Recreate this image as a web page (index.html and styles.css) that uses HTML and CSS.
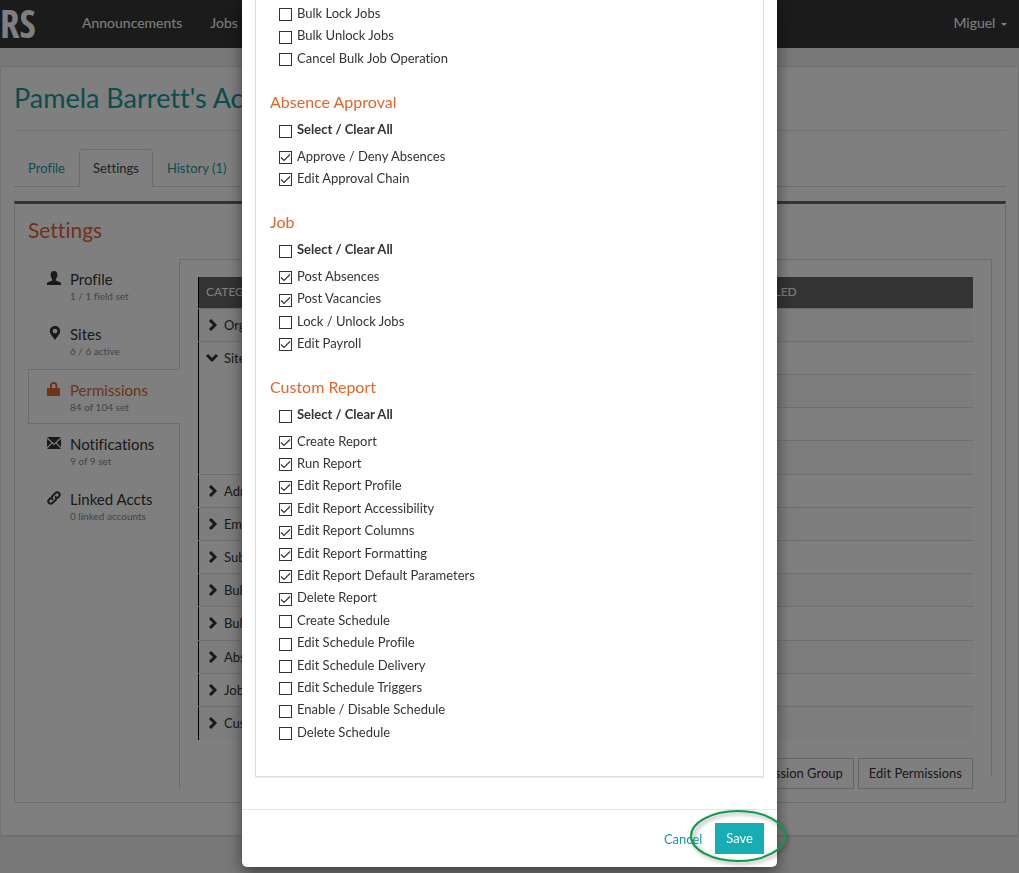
FILE: index.html
```
<!DOCTYPE html>
<html lang="en">
<head>
    <meta charset="utf-8">
    <title>Account Settings</title>
    <link rel="stylesheet" href="styles.css">
</head>
<body>

    <nav class="navbar">
        <a class="brand" href="#">RS</a>
        <a class="nav-link" href="#">Announcements</a>
        <a class="nav-link" href="#">Jobs</a>
        <a class="nav-link user" href="#">Miguel <span class="caret"></span></a>
    </nav>

    <main class="card">
        <h1>Pamela Barrett's Account</h1>

        <div class="tabs">
            <a href="#">Profile</a>
            <a class="active" href="#">Settings</a>
            <a href="#">History (1)</a>
        </div>

        <section class="settings">
            <h2>Settings</h2>
            <div class="settings-body">
                <ul class="side">
                    <li>
                        <svg class="icon" viewBox="0 0 14 14"><path d="M7 0C4.800 0 3.600 1.500 3.600 3.800c0 1.800.7 3.300 1.600 4.300v1.300L.9 11.200C.3 11.500 0 12 0 12.600V14h14v-1.400c0-.6-.3-1.100-.9-1.400L8.800 9.400V8.100c.9-1 1.600-2.500 1.600-4.300C10.400 1.500 9.200 0 7 0z"/></svg>
                        <a href="#">Profile<small>1 / 1 field set</small></a>
                    </li>
                    <li>
                        <svg class="icon" viewBox="0 0 14 14"><path fill-rule="evenodd" d="M8 0C5 0 2.800 2.200 2.800 5c0 3.300 3.400 6 5.200 9 1.800-3 5.200-5.700 5.200-9C13.200 2.200 11 0 8 0zm0 2.700a2.400 2.400 0 1 1 0 4.800 2.400 2.400 0 0 1 0-4.800z"/></svg>
                        <a href="#">Sites<small>6 / 6 active</small></a>
                    </li>
                    <li class="active">
                        <svg class="icon" viewBox="0 0 14 14"><path fill-rule="evenodd" d="M3 6V3.500C3 1.400 4.500 0 6.700 0s3.700 1.400 3.700 3.500V6H13v7.200c0 .5-.3.800-.8.800H.8c-.5 0-.8-.3-.8-.8V6zm2 0h3.400V3.600c0-1-.7-1.600-1.700-1.600S5 2.600 5 3.600z"/></svg>
                        <a href="#">Permissions<small>84 of 104 set</small></a>
                    </li>
                    <li>
                        <svg class="icon" viewBox="0 0 14 14"><path d="M0 1h14L7 7.500zM0 2.700l4.300 4L0 11.200zM14 2.700v8.500L9.700 6.700zM5.200 7.500L7 9.200l1.800-1.700L14 13H0z"/></svg>
                        <a href="#">Notifications<small>9 of 9 set</small></a>
                    </li>
                    <li>
                        <svg class="icon line" viewBox="0 0 14 14"><path d="M6 8.800C4.300 7.600 4.400 6.200 5.500 5L8.600 1.900C11 .2 14 3 12.200 5.200L10.300 7.200M8 5.200c1.700 1.200 1.600 2.600.5 3.800L5.400 12.100C3 13.800 0 11 1.800 8.800L3.700 6.800"/></svg>
                        <a href="#">Linked Accts<small>0 linked accounts</small></a>
                    </li>
                </ul>

                <div class="pane">
                    <table>
                        <thead>
                            <tr><th class="col-category">CATEGORY</th><th class="col-name">PERMISSION</th><th>ENABLED</th></tr>
                        </thead>
                        <tbody>
                            <tr><td><svg class="chevron" viewBox="0 0 12 12"><path d="M4 1l5 5-5 5"/></svg>Organization</td><td></td><td></td></tr>
                            <tr><td rowspan="4"><svg class="chevron" viewBox="0 0 12 12"><path d="M1 3l5 5 5-5"/></svg>Site</td><td></td><td></td></tr>
                            <tr><td></td><td></td></tr>
                            <tr><td></td><td></td></tr>
                            <tr><td></td><td></td></tr>
                            <tr><td><svg class="chevron" viewBox="0 0 12 12"><path d="M4 1l5 5-5 5"/></svg>Administrator</td><td></td><td></td></tr>
                            <tr><td><svg class="chevron" viewBox="0 0 12 12"><path d="M4 1l5 5-5 5"/></svg>Employee</td><td></td><td></td></tr>
                            <tr><td><svg class="chevron" viewBox="0 0 12 12"><path d="M4 1l5 5-5 5"/></svg>Substitute</td><td></td><td></td></tr>
                            <tr><td><svg class="chevron" viewBox="0 0 12 12"><path d="M4 1l5 5-5 5"/></svg>Bulk Absence</td><td></td><td></td></tr>
                            <tr><td><svg class="chevron" viewBox="0 0 12 12"><path d="M4 1l5 5-5 5"/></svg>Bulk Job</td><td></td><td></td></tr>
                            <tr><td><svg class="chevron" viewBox="0 0 12 12"><path d="M4 1l5 5-5 5"/></svg>Absence</td><td></td><td></td></tr>
                            <tr><td><svg class="chevron" viewBox="0 0 12 12"><path d="M4 1l5 5-5 5"/></svg>Job</td><td></td><td></td></tr>
                            <tr><td><svg class="chevron" viewBox="0 0 12 12"><path d="M4 1l5 5-5 5"/></svg>Custom</td><td></td><td></td></tr>
                        </tbody>
                    </table>
                    <div class="actions">
                        <button type="button">Edit Permission Group</button>
                        <button type="button">Edit Permissions</button>
                    </div>
                </div>
            </div>
        </section>
    </main>

    <div class="backdrop">
        <form class="modal">
            <div class="modal-panel">
                <ul class="checks">
                    <li><label><input type="checkbox">Bulk Lock Jobs</label></li>
                    <li><label><input type="checkbox">Bulk Unlock Jobs</label></li>
                    <li><label><input type="checkbox">Cancel Bulk Job Operation</label></li>
                </ul>

                <h3>Absence Approval</h3>
                <ul class="checks">
                    <li class="all"><label><input type="checkbox">Select / Clear All</label></li>
                    <li><label><input type="checkbox" checked>Approve / Deny Absences</label></li>
                    <li><label><input type="checkbox" checked>Edit Approval Chain</label></li>
                </ul>

                <h3>Job</h3>
                <ul class="checks">
                    <li class="all"><label><input type="checkbox">Select / Clear All</label></li>
                    <li><label><input type="checkbox" checked>Post Absences</label></li>
                    <li><label><input type="checkbox" checked>Post Vacancies</label></li>
                    <li><label><input type="checkbox">Lock / Unlock Jobs</label></li>
                    <li><label><input type="checkbox" checked>Edit Payroll</label></li>
                </ul>

                <h3>Custom Report</h3>
                <ul class="checks">
                    <li class="all"><label><input type="checkbox">Select / Clear All</label></li>
                    <li><label><input type="checkbox" checked>Create Report</label></li>
                    <li><label><input type="checkbox" checked>Run Report</label></li>
                    <li><label><input type="checkbox" checked>Edit Report Profile</label></li>
                    <li><label><input type="checkbox" checked>Edit Report Accessibility</label></li>
                    <li><label><input type="checkbox" checked>Edit Report Columns</label></li>
                    <li><label><input type="checkbox" checked>Edit Report Formatting</label></li>
                    <li><label><input type="checkbox" checked>Edit Report Default Parameters</label></li>
                    <li><label><input type="checkbox" checked>Delete Report</label></li>
                    <li><label><input type="checkbox">Create Schedule</label></li>
                    <li><label><input type="checkbox">Edit Schedule Profile</label></li>
                    <li><label><input type="checkbox">Edit Schedule Delivery</label></li>
                    <li><label><input type="checkbox">Edit Schedule Triggers</label></li>
                    <li><label><input type="checkbox">Enable / Disable Schedule</label></li>
                    <li><label><input type="checkbox">Delete Schedule</label></li>
                </ul>
            </div>

            <div class="modal-footer">
                <a href="#">Cancel</a>
                <span class="save-wrap">
                    <button type="submit">Save</button>
                    <svg class="ring" viewBox="0 0 98 56"><ellipse cx="48" cy="27" rx="47" ry="25"/></svg>
                </span>
            </div>
        </form>
    </div>

</body>
</html>
```
FILE: styles.css
```
* {
    box-sizing: border-box;
}
body {
    margin: 0;
    min-height: 100vh;
    background: #f0f0f0;
    font-family: Lato, "Liberation Sans", sans-serif;
    font-size: 13px;
    font-variant-ligatures: none;
    line-height: 20px;
    color: #333;
    overflow: hidden;
}
a {
    color: #159ba1;
    text-decoration: none;
}
ul {
    list-style: none;
    margin: 0;
    padding: 0;
}
h1, h2, h3 {
    margin: 0;
    font-weight: normal;
}

/* top bar */
.navbar {
    display: flex;
    align-items: center;
    height: 48px;
    padding: 0 12px 2px 0;
    background: #363636;
}
.brand {
    width: 82px;
    font: bold 39px/46px "Open Sans Condensed", "Roboto Condensed", Roboto, sans-serif;
    color: #fff;
}
.nav-link {
    margin-right: 28px;
    font-size: 14px;
    color: #fff;
}
.user {
    margin: 0 0 0 auto;
}
.caret {
    display: inline-block;
    margin-left: 2px;
    border: 3px solid transparent;
    border-top-color: #fff;
    border-bottom: 0;
    vertical-align: middle;
}

/* account card */
.card {
    margin-top: 18px;
    padding: 13px 12px 32px 13px;
    background: #fff;
    border: 1px solid #e0e0e0;
    border-bottom-width: 2px;
    border-radius: 4px;
}
h1 {
    padding-bottom: 14px;
    border-bottom: 1px solid #e6e6e6;
    font-size: 27px;
    line-height: 36px;
    color: #159ba1;
}
.tabs {
    display: flex;
    margin-top: 18px;
    border-bottom: 1px solid #d8d8d8;
}
.tabs a {
    margin-bottom: -1px;
    padding: 8px 13px;
    border: 1px solid transparent;
}
.tabs .active {
    color: #444;
    background: #fff;
    border-color: #d8d8d8 #d8d8d8 #fff;
    border-radius: 4px 4px 0 0;
}
.settings {
    margin-top: 14px;
    padding: 10px 13px 13px;
    border: 1px solid #d8d8d8;
    border-top: 3px solid #666;
}
h2 {
    font-size: 21px;
    line-height: 32px;
    color: #e0662b;
}
.settings-body {
    display: flex;
    margin-top: 13px;
}

/* vertical tabs */
.side {
    display: flex;
    flex-direction: column;
    width: 152px;
}
.side::after {
    content: "";
    flex: 1;
    border-right: 1px solid #d8d8d8;
}
.side li {
    display: flex;
    gap: 9px;
    height: 55px;
    padding: 10px 0 0 19px;
    border-right: 1px solid #d8d8d8;
}
.side a {
    font-size: 15px;
    color: #333;
}
.side small {
    display: block;
    font-size: 10px;
    line-height: 15px;
    color: #888;
}
.side .active {
    padding: 10px 0 0 18px;
    border: 1px solid #d8d8d8;
    border-right-color: transparent;
}
.side .active a {
    color: #e0662b;
}
.side .active small {
    color: #888;
}
.icon {
    width: 14px;
    height: 14px;
    margin-top: 2px;
    fill: #333;
}
.side .active .icon {
    fill: #e0662b;
}
.line {
    fill: none;
    stroke: #333;
    stroke-width: 2;
}

/* permissions table */
.pane {
    flex: 1;
    margin-bottom: 13px;
    padding: 17px 18px 0;
    border: 1px solid #d8d8d8;
    border-width: 1px 1px 0 0;
}
table {
    width: 100%;
    height: 463px;
    table-layout: fixed;
    border-collapse: collapse;
    border-left: 1px solid #000;
}
th {
    height: 31px;
    padding: 0 7px;
    background: #666;
    font-size: 12px;
    font-weight: normal;
    text-align: left;
    color: #fff;
}
.col-category {
    width: 310px;
}
.col-name {
    width: 227px;
}
td {
    height: 33px;
    padding: 6px 7px;
    border-top: 1px solid #dedede;
    vertical-align: top;
}
tbody tr:nth-child(odd) {
    background: #fafafa;
}
.chevron {
    width: 12px;
    height: 12px;
    margin-right: 6px;
    vertical-align: -1px;
    fill: none;
    stroke: #333;
    stroke-width: 3;
}
.actions {
    display: flex;
    justify-content: flex-end;
    gap: 4px;
    margin: 18px 0 -13px;
}
button {
    height: 31px;
    padding: 0 10px 2px;
    background: #fff;
    border: 1px solid #ccc;
    font: inherit;
    color: #333;
}

/* modal */
.backdrop {
    position: fixed;
    inset: 0;
    display: flex;
    justify-content: center;
    padding-bottom: 6px;
    background: rgba(0, 0, 0, .5);
}
.modal {
    display: flex;
    flex-direction: column;
    justify-content: flex-end;
    width: 535px;
    background: #fff;
    border-radius: 0 0 5px 5px;
    box-shadow: 0 5px 15px rgba(0, 0, 0, .5);
}
.modal-panel {
    flex: 1;
    margin: 0 13px 32px;
    padding: 3px 14px 0;
    border: 1px solid #ddd;
    border-top: 0;
    box-shadow: 0 1px 1px rgba(0, 0, 0, .08);
}
h3 {
    margin: 21px 0 6px;
    font-size: 16px;
    line-height: 22px;
    color: #e0662b;
}
.checks {
    padding-left: 9px;
    font-size: 14px;
    line-height: 1.6;
}
.checks li {
    min-height: 1.6em;
}
.checks label {
    display: flex;
    align-items: center;
    gap: 5px;
    font-size: 13px;
}
.checks .all {
    margin-bottom: 4px;
    font-weight: bold;
}
input[type="checkbox"] {
    appearance: none;
    width: 13px;
    height: 13px;
    margin: 3px 0 0;
    border: 1px solid #333;
    background: #fff;
}
input[type="checkbox"]:checked {
    background: url("data:image/svg+xml,%3Csvg xmlns='http://www.w3.org/2000/svg' viewBox='0 0 11 11'%3E%3Cpath d='M1 5.500l3 3 6-6' fill='none' stroke='%23333' stroke-width='1.200'/%3E%3C/svg%3E");
}
.modal-footer {
    display: flex;
    justify-content: flex-end;
    align-items: center;
    gap: 13px;
    padding: 13px;
    border-top: 1px solid #e5e5e5;
}
.save-wrap {
    position: relative;
}
.save-wrap button {
    background: #16adb4;
    border-color: #16adb4;
    color: #fff;
}

/* highlight around the save button */
.ring {
    position: absolute;
    left: -25px;
    top: -14px;
    width: 98px;
    height: 56px;
    overflow: visible;
    pointer-events: none;
    fill: none;
    stroke: #0d9a4c;
    stroke-width: 2;
    filter: drop-shadow(2px 2px 2px rgba(0, 0, 0, .4));
}
```
